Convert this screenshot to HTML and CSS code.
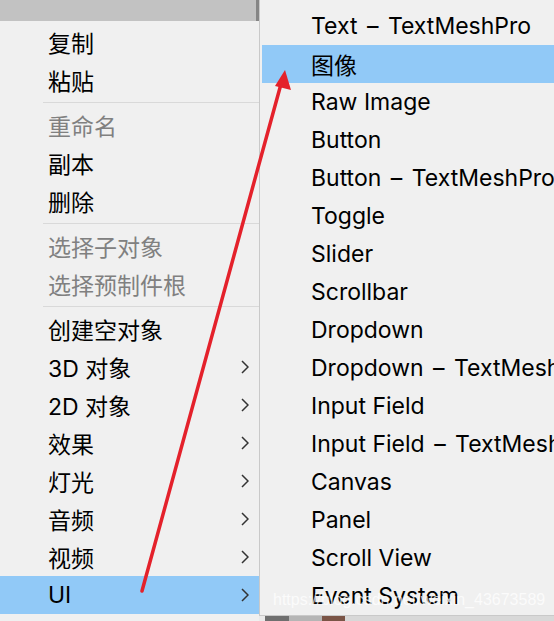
FILE: index.html
```html
<!DOCTYPE html>
<html lang="zh-CN">
<head>
<meta charset="utf-8">
<title>Menu</title>
<link rel="stylesheet" href="styles.css">
</head>
<body>
<div class="screen">
  <div class="menu">
    <div class="topbar"><div class="thumb"></div></div>
    <ul class="items">
      <li class="item">复制</li>
      <li class="item">粘贴</li>
      <li class="sep"></li>
      <li class="item disabled">重命名</li>
      <li class="item">副本</li>
      <li class="item">删除</li>
      <li class="sep"></li>
      <li class="item disabled">选择子对象</li>
      <li class="item disabled">选择预制件根</li>
      <li class="sep"></li>
      <li class="item">创建空对象</li>
      <li class="item">3D 对象<svg class="chev" viewBox="0 0 8 14"><polyline points="1,1 7,7 1,13"/></svg></li>
      <li class="item">2D 对象<svg class="chev" viewBox="0 0 8 14"><polyline points="1,1 7,7 1,13"/></svg></li>
      <li class="item">效果<svg class="chev" viewBox="0 0 8 14"><polyline points="1,1 7,7 1,13"/></svg></li>
      <li class="item">灯光<svg class="chev" viewBox="0 0 8 14"><polyline points="1,1 7,7 1,13"/></svg></li>
      <li class="item">音频<svg class="chev" viewBox="0 0 8 14"><polyline points="1,1 7,7 1,13"/></svg></li>
      <li class="item">视频<svg class="chev" viewBox="0 0 8 14"><polyline points="1,1 7,7 1,13"/></svg></li>
      <li class="item active">UI<svg class="chev" viewBox="0 0 8 14"><polyline points="1,1 7,7 1,13"/></svg></li>
    </ul>
  </div>
  <div class="right">
    <ul class="sub">
      <li class="sitem">Text<span class="dash"> – </span>TextMeshPro</li>
      <li class="sitem active">图像</li>
      <li class="sitem">Raw Image</li>
      <li class="sitem">Button</li>
      <li class="sitem">Button<span class="dash"> – </span>TextMeshPro</li>
      <li class="sitem">Toggle</li>
      <li class="sitem">Slider</li>
      <li class="sitem">Scrollbar</li>
      <li class="sitem">Dropdown</li>
      <li class="sitem">Dropdown<span class="dash"> – </span>TextMeshPro</li>
      <li class="sitem">Input Field</li>
      <li class="sitem">Input Field<span class="dash"> – </span>TextMeshPro</li>
      <li class="sitem">Canvas</li>
      <li class="sitem">Panel</li>
      <li class="sitem">Scroll View</li>
      <li class="sitem">Event System</li>
    </ul>
    <div class="under">
      <span class="u-dark"></span>
      <span class="u-mid"></span>
      <span class="u-brown"></span>
      <span class="u-light"></span>
    </div>
  </div>
  <svg class="arrow" viewBox="0 0 554 621">
    <line x1="142" y1="591" x2="281" y2="84"/>
    <polygon points="285,70 291,90 275,86"/>
  </svg>
  <div class="watermark">https://blog.csdn.net/weixin_43673589</div>
</div>
</body>
</html>
```

FILE: styles.css
```css
* { box-sizing: border-box; }

html, body {
  margin: 0;
  padding: 0;
  background: #f0f0f0;
}

.screen {
  position: relative;
  width: 554px;
  height: 621px;
  display: flex;
  overflow: hidden;
  font-family: Inter, "Noto Sans CJK SC", sans-serif;
  font-size: 23px;
  font-weight: 400;
  color: #000;
}

.menu {
  width: 259px;
  flex: none;
  background: #f0f0f0;
}

.topbar {
  height: 21px;
  margin-bottom: 2px;
  background: #c2c2c2;
  display: flex;
  justify-content: flex-end;
}

.thumb {
  width: 3px;
  background: #858585;
}

.items, .sub {
  list-style: none;
  margin: 0;
  padding: 0;
}

.item {
  height: 38px;
  display: flex;
  align-items: center;
  padding-left: 48px;
  padding-right: 10px;
  white-space: nowrap;
}

.item.disabled { color: #808080; }

.item.active { background: #91c9f7; }

.sep {
  height: 1px;
  margin: 3px 0 3px 43px;
  background: #d9d9d9;
}

.chev {
  width: 8px;
  height: 14px;
  margin-left: auto;
  fill: none;
  stroke: #333;
  stroke-width: 1.5;
}

.right {
  flex: 1;
  display: flex;
  flex-direction: column;
  min-width: 0;
}

.sub {
  height: 616px;
  flex: none;
  padding-top: 7px;
  background: #f0f0f0;
  border-left: 1px solid #c9c9c9;
  border-bottom: 1px solid #c9c9c9;
}

.sitem {
  height: 38px;
  margin-left: 2px;
  padding-left: 49px;
  display: flex;
  align-items: center;
  white-space: pre;
  overflow: hidden;
}

.dash { word-spacing: 3px; }

.sitem.active { background: #91c9f7; }

.under {
  flex: 1;
  display: flex;
  padding-left: 6px;
  background: #eaeaea;
}

.u-dark { width: 24px; background: #6f6f6f; }
.u-mid { width: 33px; background: #b5b5b5; }
.u-brown { width: 23px; background: #7a5446; }
.u-light { flex: 1; background: #d8d8d8; }

.arrow {
  position: absolute;
  left: 0;
  top: 0;
  width: 554px;
  height: 621px;
  pointer-events: none;
}

.arrow line {
  stroke: #e4212b;
  stroke-width: 3.5;
  stroke-linecap: round;
}

.arrow polygon { fill: #e4212b; }

.watermark {
  position: absolute;
  left: 273px;
  top: 592px;
  font-family: "Liberation Sans", Arial, sans-serif;
  font-size: 16px;
  line-height: 16px;
  color: rgba(255, 255, 255, 0.75);
  white-space: nowrap;
  pointer-events: none;
}
```
